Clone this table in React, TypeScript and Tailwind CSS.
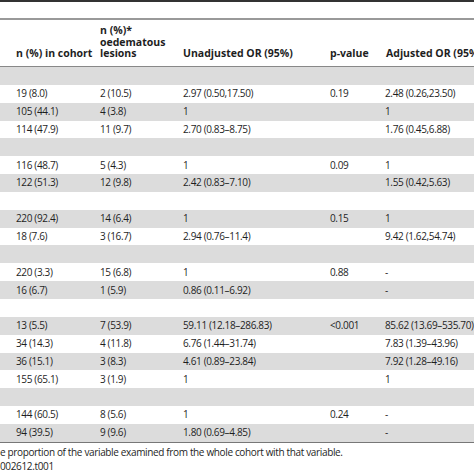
import React from "react";

const rows: [string, string, string, string, string][] = [
  ["", "", "", "", ""],
  ["19 (8.0)", "2 (10.5)", "2.97 (0.50,17.50)", "0.19", "2.48 (0.26,23.50)"],
  ["105 (44.1)", "4 (3.8)", "1", "", "1"],
  ["114 (47.9)", "11 (9.7)", "2.70 (0.83–8.75)", "", "1.76 (0.45,6.88)"],
  ["", "", "", "", ""],
  ["116 (48.7)", "5 (4.3)", "1", "0.09", "1"],
  ["122 (51.3)", "12 (9.8)", "2.42 (0.83–7.10)", "", "1.55 (0.42,5.63)"],
  ["", "", "", "", ""],
  ["220 (92.4)", "14 (6.4)", "1", "0.15", "1"],
  ["18 (7.6)", "3 (16.7)", "2.94 (0.76–11.4)", "", "9.42 (1.62,54.74)"],
  ["", "", "", "", ""],
  ["220 (3.3)", "15 (6.8)", "1", "0.88", "-"],
  ["16 (6.7)", "1 (5.9)", "0.86 (0.11–6.92)", "", "-"],
  ["", "", "", "", ""],
  ["13 (5.5)", "7 (53.9)", "59.11 (12.18–286.83)", "<0.001", "85.62 (13.69–535.70)"],
  ["34 (14.3)", "4 (11.8)", "6.76 (1.44–31.74)", "", "7.83 (1.39–43.96)"],
  ["36 (15.1)", "3 (8.3)", "4.61 (0.89–23.84)", "", "7.92 (1.28–49.16)"],
  ["155 (65.1)", "3 (1.9)", "1", "", "1"],
  ["", "", "", "", ""],
  ["144 (60.5)", "8 (5.6)", "1", "0.24", "-"],
  ["94 (39.5)", "9 (9.6)", "1.80 (0.69–4.85)", "", "-"],
];

export default function App() {
  return (
    <div
      className="w-[474px] h-[474px] overflow-hidden bg-white text-[#1e1e1e]"
      style={{ fontFamily: '"Open Sans", "Liberation Sans", sans-serif' }}
    >
      <div className="h-[2px] bg-[#333]" />
      <div className="mt-[16px] h-[2px] bg-[#999]" />
      <div className="h-[47px] border-b border-[#888] pl-[16px] pb-[6px] grid grid-cols-[84px_83px_147px_56px_1fr] items-end font-bold text-[10.5px] leading-[11.6px] whitespace-nowrap">
        <div>n (%) in cohort</div>
        <div className="flex flex-col">
          <span>n (%)*</span>
          <span>oedematous</span>
          <span>lesions</span>
        </div>
        <div>Unadjusted OR (95%)</div>
        <div>p-value</div>
        <div>Adjusted OR (95%)</div>
      </div>
      <div className="border-b border-[#777]">
        {rows.map((r, i) => (
          <div
            key={i}
            className={`h-[17.85px] pl-[16px] grid grid-cols-[84px_83px_147px_56px_1fr] items-center text-[10px] tracking-[-0.35px] whitespace-nowrap ${
              i % 2 === 0 ? "bg-[#dcdcdc]" : "bg-white"
            }`}
          >
            <div>{r[0]}</div>
            <div>{r[1]}</div>
            <div>{r[2]}</div>
            <div>{r[3]}</div>
            <div className="-ml-[1px]">{r[4]}</div>
          </div>
        ))}
      </div>
      <div className="pt-[2px] text-[10px] tracking-[-0.35px] leading-[14px] whitespace-nowrap">
        <div>e proportion of the variable examined from the whole cohort with that variable.</div>
        <div>002612.t001</div>
      </div>
    </div>
  );
}
